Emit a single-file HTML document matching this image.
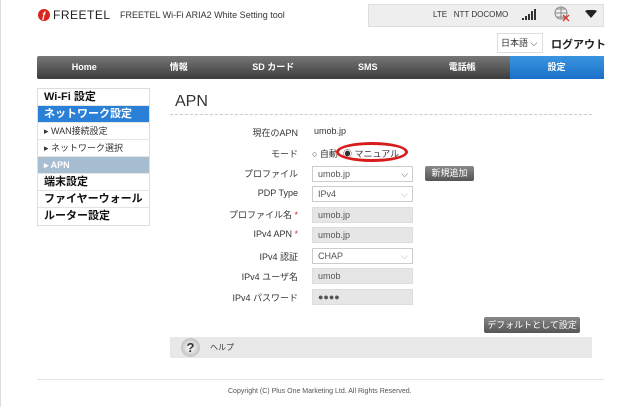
<!DOCTYPE html>
<html><head><meta charset="utf-8"><style>
*{margin:0;padding:0;box-sizing:border-box}
body{width:640px;height:407px;background:#fff;font-family:"Liberation Sans","Noto Sans CJK JP",sans-serif;position:relative;overflow:hidden;color:#333}
.a{position:absolute;white-space:nowrap}
.nav{left:37px;top:56px;width:567px;height:23px;background:linear-gradient(#777,#3c3c3c);border-radius:2px;display:flex}
.nav div{width:94.5px;text-align:center;color:#fff;font-size:9px;font-weight:bold;line-height:23px}
.nav .on{background:linear-gradient(#3a95e0,#1a70c8)}
.side{left:37px;top:88px;width:113px;border:1px solid #ddd}
.side div{height:17px;line-height:17px;padding-left:6px;border-bottom:1px solid #e4e4e4;font-size:10px}
.b{font-weight:bold;font-size:11px!important;color:#111}
.lab{font-size:9px;text-align:right;width:150px;left:148px}
.inp{left:312px;width:101px;height:16px;border:1px solid #ccc;font-size:9px;line-height:14px;padding-left:5px;color:#555;background:#fff}
.g{background:#e6e6e6;border-color:#ddd}
.btn{background:linear-gradient(#888,#555);color:#fff;font-size:9px;text-align:center;border-radius:2px}
</style></head><body>
<div class="a" style="left:0;top:0;width:1px;height:407px;background:#ddd"></div>
<div class="a" style="left:38px;top:9px;width:12px;height:12px;border-radius:50%;background:#d8261c;color:#fff;font-size:9px;font-weight:bold;text-align:center;line-height:12px">ƒ</div>
<div class="a" style="left:53px;top:8px;font-size:12px;letter-spacing:0.5px;color:#222">FREETEL</div>
<div class="a" style="left:120px;top:10px;font-size:9px;color:#333">FREETEL Wi-Fi ARIA2 White Setting tool</div>
<div class="a" style="left:368px;top:4px;width:236px;height:23px;background:#eee;border:1px solid #ddd"></div>
<div class="a" style="left:433px;top:10px;font-size:8px">LTE &nbsp; NTT DOCOMO</div>
<svg class="a" style="left:521px;top:9px" width="16" height="12"><rect x="1" y="9" width="2" height="2" fill="#333"/><rect x="4" y="7" width="2" height="4" fill="#333"/><rect x="7" y="5" width="2" height="6" fill="#333"/><rect x="10" y="2" width="2" height="9" fill="#333"/><rect x="13" y="0" width="2" height="11" fill="#333"/></svg>
<svg class="a" style="left:554px;top:6px" width="16" height="16"><circle cx="7" cy="7" r="6" fill="none" stroke="#888"/><path d="M1 7h12M7 1v12M3 3h8M3 11h8" stroke="#888"/><path d="M9 9l6 6M15 9l-6 6" stroke="#d33" stroke-width="1.3"/></svg>
<svg class="a" style="left:585px;top:10px" width="12" height="8"><path d="M0 1Q6-2 12 1L6 8Z" fill="#222"/></svg>
<div class="a" style="left:497px;top:33px;width:46px;height:20px;border:1px solid #ddd;font-size:9px;line-height:18px;padding-left:3px">日本語 ⌵</div>
<div class="a" style="left:551px;top:36px;font-size:11px;font-weight:bold;color:#222">ログアウト</div>
<div class="a nav"><div>Home</div><div>情報</div><div>SD カード</div><div>SMS</div><div>電話帳</div><div class="on" style="width:94px">設定</div></div>
<div class="a side">
<div class="b">Wi-Fi 設定</div>
<div class="b" style="background:#2a80d6;color:#fff">ネットワーク設定</div>
<div style="font-size:9px">▸ WAN接続設定</div>
<div style="font-size:9px">▸ ネットワーク選択</div>
<div style="font-size:9px;background:#a7bdd2;color:#fff;font-weight:bold">▸ APN</div>
<div class="b">端末設定</div>
<div class="b">ファイヤーウォール</div>
<div class="b" style="border-bottom:0">ルーター設定</div>
</div>
<div class="a" style="left:175px;top:93px;font-size:16px;color:#333">APN</div>
<div class="a" style="left:170px;top:114px;width:422px;border-top:1px dashed #ccc"></div>
<div class="a lab" style="top:126px">現在のAPN</div>
<div class="a" style="left:314px;top:126px;font-size:9px">umob.jp</div>
<div class="a lab" style="top:147px">モード</div>
<div class="a" style="left:312px;top:147px;font-size:9px">○ 自動 &nbsp;◉ マニュアル</div>
<div class="a" style="left:336px;top:142px;width:72px;height:20px;border:3px solid #d81c1c;border-radius:50%"></div>
<div class="a lab" style="top:167px">プロファイル</div>
<div class="a inp" style="top:166px">umob.jp<span style="float:right;padding-right:4px">⌵</span></div>
<div class="a btn" style="left:425px;top:166px;width:49px;height:15px;line-height:15px">新規追加</div>
<div class="a lab" style="top:188px">PDP Type</div>
<div class="a inp" style="top:186px">IPv4<span style="float:right;padding-right:4px;color:#aaa">⌵</span></div>
<div class="a lab" style="top:208px">プロファイル名 <span style="color:#d33">*</span></div>
<div class="a inp g" style="top:207px">umob.jp</div>
<div class="a lab" style="top:229px">IPv4 APN <span style="color:#d33">*</span></div>
<div class="a inp g" style="top:227px">umob.jp</div>
<div class="a lab" style="top:250px">IPv4 認証</div>
<div class="a inp" style="top:248px">CHAP<span style="float:right;padding-right:4px;color:#aaa">⌵</span></div>
<div class="a lab" style="top:270px">IPv4 ユーザ名</div>
<div class="a inp g" style="top:268px">umob</div>
<div class="a lab" style="top:291px">IPv4 パスワード</div>
<div class="a inp g" style="top:289px">●●●●</div>
<div class="a btn" style="left:484px;top:317px;width:96px;height:16px;line-height:16px">デフォルトとして設定</div>
<div class="a" style="left:170px;top:337px;width:422px;height:21px;background:#e8e8e8"></div>
<div class="a" style="left:181px;top:338px;width:19px;height:19px;border-radius:50%;background:radial-gradient(#fff,#aaa);text-align:center;font-weight:bold;font-size:13px;line-height:19px;color:#333">?</div>
<div class="a" style="left:210px;top:342px;font-size:8px">ヘルプ</div>
<div class="a" style="left:37px;top:379px;width:567px;border-top:1px solid #e4e4e4"></div>
<div class="a" style="left:228px;top:388px;font-size:7px;color:#555">Copyright (C) Plus One Marketing Ltd. All Rights Reserved.</div>
</body></html>
